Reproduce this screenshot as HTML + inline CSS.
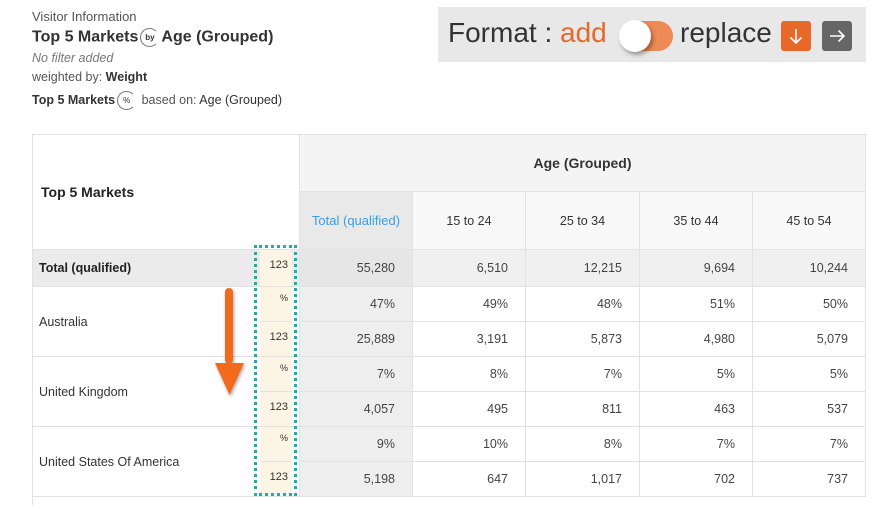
<!DOCTYPE html>
<html><head><style>
body{margin:0;width:870px;height:501px;background:#fff;font-family:"Liberation Sans",sans-serif;color:#333;position:relative;overflow:hidden}
.a{position:absolute}
.c{position:absolute;box-sizing:border-box;border-right:1px solid #e2e2e2;border-bottom:1px solid #e2e2e2;font-size:12.5px;display:flex;align-items:center}
.n{justify-content:flex-end;padding-right:17px;color:#444}
.ic{display:inline-block;width:17px;height:17px;border:1px solid #777;border-radius:50%;font-size:8px;text-align:center;line-height:17px;vertical-align:middle;margin:0 2px;color:#333;border-right-color:transparent}
</style></head><body>
<div class="a" style="left:32px;top:9px;font-size:13px;color:#555">Visitor Information</div>
<div class="a" style="left:32px;top:28px;font-size:16px;font-weight:bold;color:#333">Top 5 Markets<span class="ic">by</span>Age (Grouped)</div>
<div class="a" style="left:32px;top:51px;font-size:12.5px;color:#777;font-style:italic">No filter added</div>
<div class="a" style="left:32px;top:70px;font-size:12.5px;color:#555">weighted by: <b style="color:#333">Weight</b></div>
<div class="a" style="left:32px;top:91px;font-size:12.5px;color:#555"><b style="color:#333">Top 5 Markets</b><span class="ic">%</span> based on: <span style="color:#333">Age (Grouped)</span></div>

<div class="a" style="left:438px;top:7px;width:428px;height:55px;background:#e8e8e8"></div>
<div class="a" style="left:448px;top:17px;font-size:28px;color:#333">Format : <span style="color:#e8682a">add</span></div>
<div class="a" style="left:620px;top:21px;width:53px;height:30px;border-radius:15px;background:#ee8a55"></div>
<div class="a" style="left:619px;top:20px;width:32px;height:32px;border-radius:50%;background:#fff;box-shadow:2px 3px 4px rgba(0,0,0,.35)"></div>
<div class="a" style="left:680px;top:17px;font-size:28px;color:#333">replace</div>
<div class="a" style="left:781px;top:21px;width:30px;height:30px;background:#e8682a;border-radius:3px"><svg width="30" height="30"><path d="M15 8v14M9.5 16.5l5.5 5.5 5.5-5.5" fill="none" stroke="#fff" stroke-width="1.6"/></svg></div>
<div class="a" style="left:822px;top:21px;width:30px;height:30px;background:#666;border-radius:3px"><svg width="30" height="30"><path d="M8 15h14M16.5 9.5l5.5 5.5-5.5 5.5" fill="none" stroke="#fff" stroke-width="1.6"/></svg></div>

<div class="a" style="left:32px;top:134px;width:834px;height:370px;border-top:1px solid #e2e2e2;border-left:1px solid #e2e2e2"></div>
<div class="c" style="left:32px;top:134px;width:268px;height:116px;padding-left:8px;font-weight:bold;font-size:14px;color:#222;background:#fff;border-left:1px solid #e2e2e2;border-top:1px solid #e2e2e2">Top 5 Markets</div>
<div class="c" style="left:300px;top:134px;width:566px;height:58px;justify-content:center;background:#f4f4f4;font-weight:bold;font-size:14px;border-top:1px solid #e2e2e2">Age (Grouped)</div>
<div class="c" style="left:300px;top:192px;width:113px;height:58px;justify-content:center;background:#e9e9e9;color:#3a9ee8;font-size:13px">Total (qualified)</div>
<div class="c" style="left:413px;top:192px;width:113px;height:58px;justify-content:center;background:#f8f8f8">15 to 24</div>
<div class="c" style="left:526px;top:192px;width:114px;height:58px;justify-content:center;background:#f8f8f8">25 to 34</div>
<div class="c" style="left:640px;top:192px;width:113px;height:58px;justify-content:center;background:#f8f8f8">35 to 44</div>
<div class="c" style="left:753px;top:192px;width:113px;height:58px;justify-content:center;background:#f8f8f8">45 to 54</div>

<div class="c" style="left:32px;top:250px;width:268px;height:37px;padding-left:6px;background:#ebebeb;font-weight:bold;color:#222;border-left:1px solid #e2e2e2">Total (qualified)</div>
<div class="c" style="left:32px;top:287px;width:268px;height:70px;padding-left:6px;background:#fff;border-left:1px solid #e2e2e2">Australia</div>
<div class="c" style="left:32px;top:357px;width:268px;height:70px;padding-left:6px;background:#fff;border-left:1px solid #e2e2e2">United Kingdom</div>
<div class="c" style="left:32px;top:427px;width:268px;height:70px;padding-left:6px;background:#fff;border-left:1px solid #e2e2e2">United States Of America</div>

<div id="g"></div>
<script>
var rows=[[250,37,["55,280","6,510","12,215","9,694","10,244"],1],[287,35,["47%","49%","48%","51%","50%"]],[322,35,["25,889","3,191","5,873","4,980","5,079"]],[357,35,["7%","8%","7%","5%","5%"]],[392,35,["4,057","495","811","463","537"]],[427,35,["9%","10%","8%","7%","7%"]],[462,35,["5,198","647","1,017","702","737"]]];
var xs=[300,413,526,640,753,866],h="";
rows.forEach(function(r){for(var i=0;i<5;i++){var bg=i==0?(r[3]?"#e6e6e6":"#eeeeee"):(r[3]?"#f0f0f0":"#fff");h+='<div class="c n" style="left:'+xs[i]+'px;top:'+r[0]+'px;width:'+(xs[i+1]-xs[i])+'px;height:'+r[1]+'px;background:'+bg+'">'+r[2][i]+'</div>';}
var t=r[2][0].indexOf('%')>=0?'%':'123';h+='<div class="a" style="left:260px;top:'+r[0]+'px;width:32px;height:'+r[1]+'px;background:#fcf4e4;border-bottom:1px solid #e2e2e2;box-sizing:border-box;font-size:'+(t=='%'?9:11)+'px;text-align:right;padding:'+(t=='%'?6:9)+'px 4px 0 0;color:#333">'+t+'</div>';});
document.getElementById('g').innerHTML=h;
</script>
<div class="a" style="left:254px;top:245px;width:37px;height:245px;border:3px dotted #1fada6"></div>
<svg class="a" style="left:212px;top:284px" width="40" height="116"><defs><filter id="s"><feDropShadow dx="1" dy="2" stdDeviation="1.5" flood-opacity=".35"/></filter></defs><g filter="url(#s)" fill="#f26a1b"><rect x="13" y="4" width="8" height="76" rx="4"/><polygon points="3,79 32,79 17.5,111"/></g></svg>
</body></html>
